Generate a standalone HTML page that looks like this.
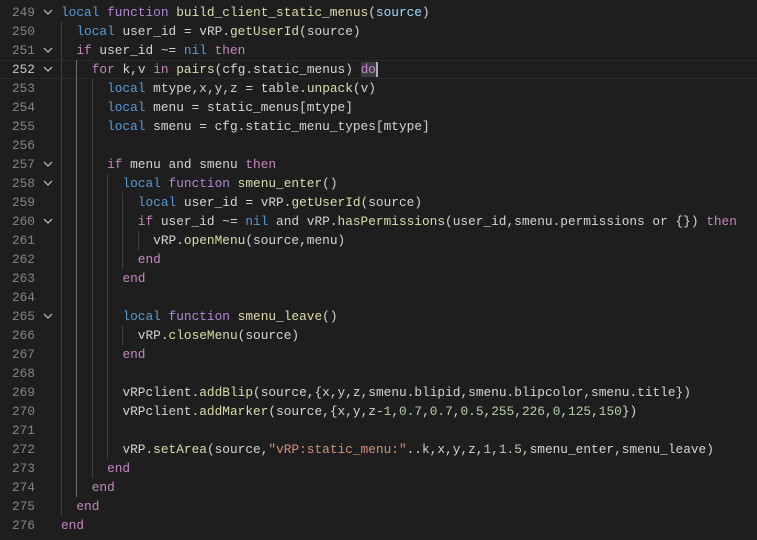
<!DOCTYPE html>
<html><head><meta charset="utf-8"><style>
body{margin:0;background:#1e1e1e;width:757px;height:540px;overflow:hidden;position:relative;font-family:"Liberation Mono",monospace;font-size:12.8px}
.ln{position:absolute;left:0;width:35px;text-align:right;color:#858585;height:19px;line-height:19px}
.code{position:absolute;left:61px;white-space:pre;color:#d4d4d4;height:19px;line-height:19px}
.g{position:absolute;width:1px;background:#404040}
.k{color:#569cd6}.fn{color:#b088d8}.c{color:#c586c0}.f{color:#dcdcaa}.v{color:#d4d4d4}.src{color:#d4d4d4}.s{color:#ce9178}.n{color:#b5cea8}.p1{color:#d4d4d4}.p2{color:#d4d4d4}
</style></head><body>
<div style="position:absolute;left:0;top:60px;width:757px;height:19px;box-sizing:border-box;border-top:1px solid #282828;border-bottom:1px solid #282828"></div>
<div class="g" style="left:61px;top:22px;height:494px"></div>
<div class="g" style="left:76px;top:60px;height:437px;background:#707070"></div>
<div class="g" style="left:92px;top:79px;height:399px"></div>
<div class="g" style="left:107px;top:174px;height:285px"></div>
<div class="g" style="left:122px;top:193px;height:76px"></div>
<div class="g" style="left:122px;top:326px;height:19px"></div>
<div class="g" style="left:138px;top:231px;height:19px"></div>
<div class="ln" style="top:3px">249</div><div class="code" style="top:3px"><span class="k">local</span> <span class="fn">function</span> <span class="f">build_client_static_menus</span><span class="p1">(</span><span style="color:#9cdcfe">source</span><span class="p1">)</span></div>
<div class="ln" style="top:22px">250</div><div class="code" style="top:22px">  <span class="k">local</span> <span class="v">user_id</span> = <span class="v">vRP</span>.<span class="f">getUserId</span><span class="p1">(</span><span class="src">source</span><span class="p1">)</span></div>
<div class="ln" style="top:41px">251</div><div class="code" style="top:41px">  <span class="c">if</span> <span class="v">user_id</span> ~= <span class="k">nil</span> <span class="c">then</span></div>
<div class="ln" style="top:60px;color:#c6c6c6">252</div><div class="code" style="top:60px">    <span class="c">for</span> <span class="v">k</span>,<span class="v">v</span> <span class="c">in</span> <span class="f">pairs</span><span class="p1">(</span><span class="v">cfg</span>.<span class="v">static_menus</span><span class="p1">)</span> <span class="c" style="background:#3a3d41">do</span><span style="border-left:2px solid #aeafad"></span></div>
<div class="ln" style="top:79px">253</div><div class="code" style="top:79px">      <span class="k">local</span> <span class="v">mtype</span>,<span class="v">x</span>,<span class="v">y</span>,<span class="v">z</span> = <span class="v">table</span>.<span class="f">unpack</span><span class="p1">(</span><span class="v">v</span><span class="p1">)</span></div>
<div class="ln" style="top:98px">254</div><div class="code" style="top:98px">      <span class="k">local</span> <span class="v">menu</span> = <span class="v">static_menus</span><span class="p1">[</span><span class="v">mtype</span><span class="p1">]</span></div>
<div class="ln" style="top:117px">255</div><div class="code" style="top:117px">      <span class="k">local</span> <span class="v">smenu</span> = <span class="v">cfg</span>.<span class="v">static_menu_types</span><span class="p1">[</span><span class="v">mtype</span><span class="p1">]</span></div>
<div class="ln" style="top:136px">256</div>
<div class="ln" style="top:155px">257</div><div class="code" style="top:155px">      <span class="c">if</span> <span class="v">menu</span> and <span class="v">smenu</span> <span class="c">then</span></div>
<div class="ln" style="top:174px">258</div><div class="code" style="top:174px">        <span class="k">local</span> <span class="fn">function</span> <span class="f">smenu_enter</span><span class="p1">()</span></div>
<div class="ln" style="top:193px">259</div><div class="code" style="top:193px">          <span class="k">local</span> <span class="v">user_id</span> = <span class="v">vRP</span>.<span class="f">getUserId</span><span class="p1">(</span><span class="src">source</span><span class="p1">)</span></div>
<div class="ln" style="top:212px">260</div><div class="code" style="top:212px">          <span class="c">if</span> <span class="v">user_id</span> ~= <span class="k">nil</span> and <span class="v">vRP</span>.<span class="f">hasPermissions</span><span class="p1">(</span><span class="v">user_id</span>,<span class="v">smenu</span>.<span class="src">permissions</span> or <span class="p2">{}</span><span class="p1">)</span> <span class="c">then</span></div>
<div class="ln" style="top:231px">261</div><div class="code" style="top:231px">            <span class="v">vRP</span>.<span class="f">openMenu</span><span class="p1">(</span><span class="src">source</span>,<span class="v">menu</span><span class="p1">)</span></div>
<div class="ln" style="top:250px">262</div><div class="code" style="top:250px">          <span class="c">end</span></div>
<div class="ln" style="top:269px">263</div><div class="code" style="top:269px">        <span class="c">end</span></div>
<div class="ln" style="top:288px">264</div>
<div class="ln" style="top:307px">265</div><div class="code" style="top:307px">        <span class="k">local</span> <span class="fn">function</span> <span class="f">smenu_leave</span><span class="p1">()</span></div>
<div class="ln" style="top:326px">266</div><div class="code" style="top:326px">          <span class="v">vRP</span>.<span class="f">closeMenu</span><span class="p1">(</span><span class="src">source</span><span class="p1">)</span></div>
<div class="ln" style="top:345px">267</div><div class="code" style="top:345px">        <span class="c">end</span></div>
<div class="ln" style="top:364px">268</div>
<div class="ln" style="top:383px">269</div><div class="code" style="top:383px">        <span class="v">vRPclient</span>.<span class="f">addBlip</span><span class="p1">(</span><span class="src">source</span>,<span class="p2">{</span><span class="v">x</span>,<span class="v">y</span>,<span class="v">z</span>,<span class="v">smenu</span>.<span class="v">blipid</span>,<span class="v">smenu</span>.<span class="v">blipcolor</span>,<span class="v">smenu</span>.<span class="v">title</span><span class="p2">}</span><span class="p1">)</span></div>
<div class="ln" style="top:402px">270</div><div class="code" style="top:402px">        <span class="v">vRPclient</span>.<span class="f">addMarker</span><span class="p1">(</span><span class="src">source</span>,<span class="p2">{</span><span class="v">x</span>,<span class="v">y</span>,<span class="v">z</span>-<span class="n">1</span>,<span class="n">0.7</span>,<span class="n">0.7</span>,<span class="n">0.5</span>,<span class="n">255</span>,<span class="n">226</span>,<span class="n">0</span>,<span class="n">125</span>,<span class="n">150</span><span class="p2">}</span><span class="p1">)</span></div>
<div class="ln" style="top:421px">271</div>
<div class="ln" style="top:440px">272</div><div class="code" style="top:440px">        <span class="v">vRP</span>.<span class="f">setArea</span><span class="p1">(</span><span class="src">source</span>,<span class="s">"vRP:static_menu:"</span>..<span class="v">k</span>,<span class="v">x</span>,<span class="v">y</span>,<span class="v">z</span>,<span class="n">1</span>,<span class="n">1.5</span>,<span class="v">smenu_enter</span>,<span class="v">smenu_leave</span><span class="p1">)</span></div>
<div class="ln" style="top:459px">273</div><div class="code" style="top:459px">      <span class="c">end</span></div>
<div class="ln" style="top:478px">274</div><div class="code" style="top:478px">    <span class="c">end</span></div>
<div class="ln" style="top:497px">275</div><div class="code" style="top:497px">  <span class="c">end</span></div>
<div class="ln" style="top:516px">276</div><div class="code" style="top:516px"><span class="c">end</span></div>
<svg style="position:absolute;left:0;top:0" width="757" height="540">
<g fill="none" stroke="#c5c5c5" stroke-width="1.2">
<path d="M44 10l4 4 4-4"/><path d="M44 48l4 4 4-4"/><path d="M44 67l4 4 4-4"/><path d="M44 162l4 4 4-4"/><path d="M44 181l4 4 4-4"/><path d="M44 219l4 4 4-4"/><path d="M44 314l4 4 4-4"/>
</g></svg>
</body></html>
